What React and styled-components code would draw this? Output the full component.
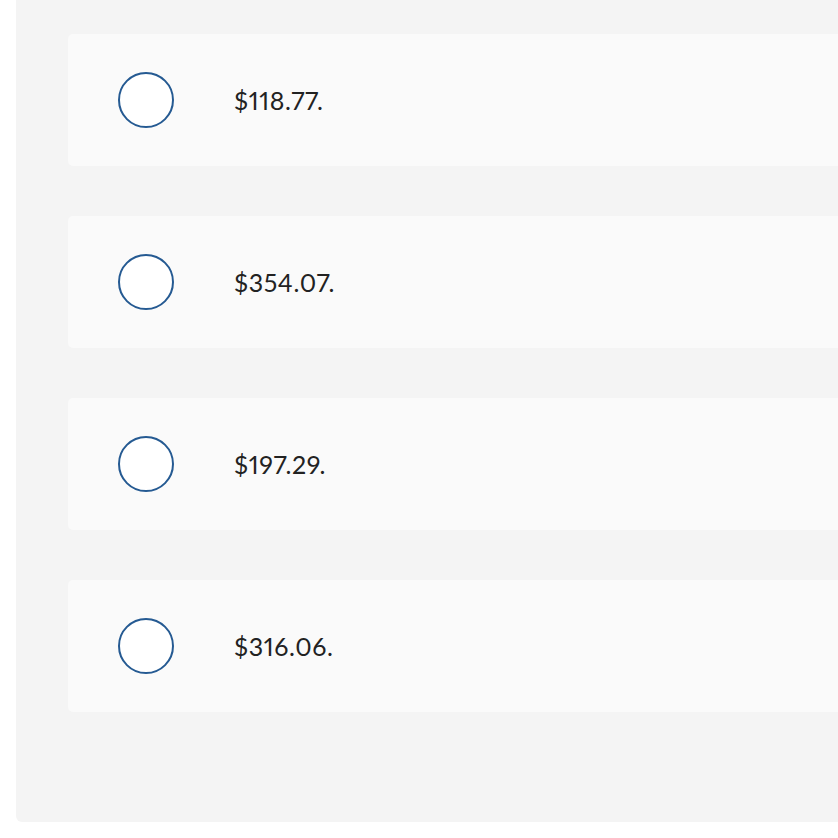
import React from "react";
import styled, { createGlobalStyle } from "styled-components";

const GlobalStyle = createGlobalStyle`
  html, body {
    margin: 0;
    padding: 0;
    background: #fff;
    overflow: hidden;
  }
  body {
    font-family: "Lato", "Open Sans", sans-serif;
  }
`;

const answers = ["$118.77.", "$354.07.", "$197.29.", "$316.06."];

const Page = styled.div`
  width: 838px;
  height: 838px;
  overflow: hidden;
`;

const Panel = styled.div`
  margin-left: 16px;
  width: 900px;
  height: 822px;
  box-sizing: border-box;
  background: #f4f4f4;
  border-radius: 0 0 6px 6px;
  padding: 34px 0 0 52px;
  display: flex;
  flex-direction: column;
  gap: 50px;
`;

const Option = styled.label`
  display: flex;
  align-items: center;
  height: 132px;
  box-sizing: border-box;
  padding-left: 50px;
  background: #fafafa;
  border-radius: 5px;
  cursor: pointer;
`;

const Radio = styled.span`
  width: 56px;
  height: 56px;
  box-sizing: border-box;
  border: 2px solid #255a92;
  border-radius: 50%;
  background: #fff;
  flex-shrink: 0;
`;

const Text = styled.span`
  margin-left: 60px;
  font-size: 25px;
  color: #222;
  letter-spacing: 0.6px;
  font-variant-numeric: proportional-nums;
`;

const App = () => {
  return (
    <Page>
      <GlobalStyle />
      <Panel>
        {answers.map((a) => (
          <Option key={a}>
            <Radio />
            <Text>{a}</Text>
          </Option>
        ))}
      </Panel>
    </Page>
  );
};

export default App;
